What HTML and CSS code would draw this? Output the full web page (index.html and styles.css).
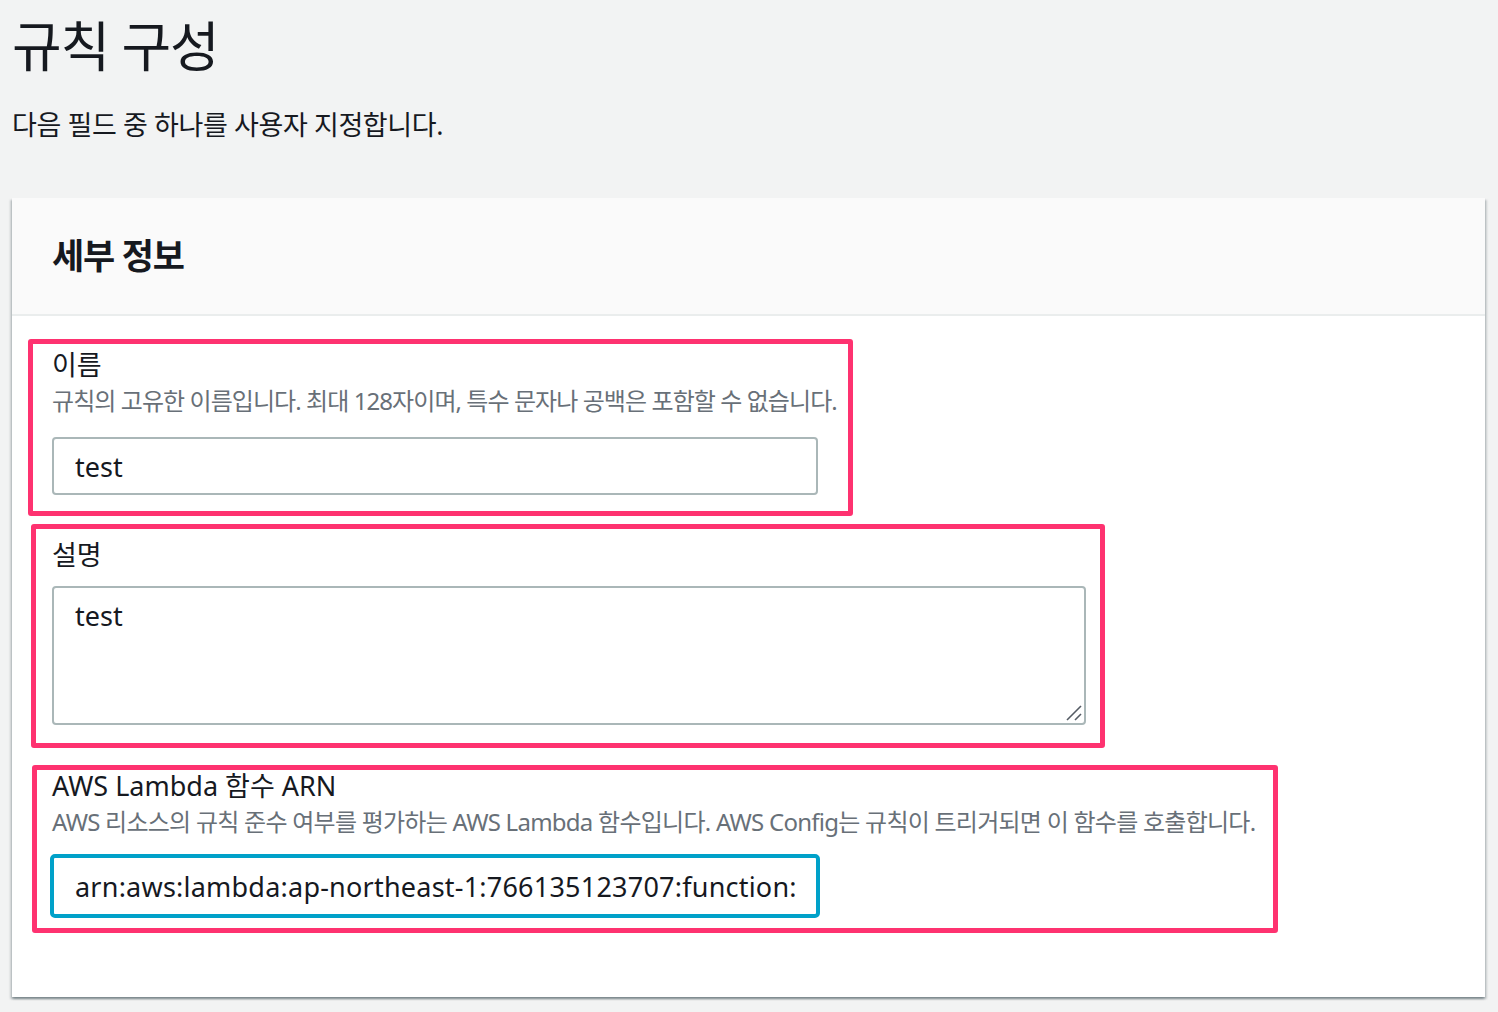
FILE: index.html
```html
<!DOCTYPE html>
<html lang="ko">
<head>
<meta charset="utf-8">
<title>규칙 구성</title>
<link rel="stylesheet" href="styles.css">
</head>
<body>
<div class="page">
  <h1 class="title">규칙 구성</h1>
  <p class="subtitle">다음 필드 중 하나를 사용자 지정합니다.</p>

  <section class="card">
    <header class="card-header">
      <h2 class="card-title">세부 정보</h2>
    </header>
    <div class="card-body">
      <div class="field field-name">
        <div class="label">이름</div>
        <div class="desc desc-name">규칙의 고유한 이름입니다. 최대 128자이며, 특수 문자나 공백은 포함할 수 없습니다.</div>
        <input class="input input-name" type="text" value="test">
      </div>

      <div class="field field-desc">
        <div class="label">설명</div>
        <div class="textarea-wrap">
          <textarea class="textarea">test</textarea>
          <svg class="grip" width="18" height="18" viewBox="0 0 18 18" aria-hidden="true">
            <line x1="2" y1="16" x2="16" y2="2" stroke="#545b64" stroke-width="1.6"/>
            <line x1="10" y1="16" x2="16" y2="10" stroke="#545b64" stroke-width="1.6"/>
          </svg>
        </div>
      </div>

      <div class="field field-arn">
        <div class="label label-arn">AWS Lambda 함수 ARN</div>
        <div class="desc desc-arn">AWS 리소스의 규칙 준수 여부를 평가하는 AWS Lambda 함수입니다. AWS Config는 규칙이 트리거되면 이 함수를 호출합니다.</div>
        <input class="input input-arn" type="text" value="arn:aws:lambda:ap-northeast-1:766135123707:function:">
      </div>
    </div>
  </section>
</div>
</body>
</html>
```
FILE: styles.css
```css
* { box-sizing: border-box; }

html, body {
  margin: 0;
  padding: 0;
}

body {
  background: #f2f3f3;
  color: #16191f;
  font-family: "Noto Sans", "Noto Sans CJK KR", sans-serif;
}

.page {
  padding: 0 0 0 12px;
  width: 1498px;
  height: 1012px;
  overflow: hidden;
}

.title {
  margin: 14px 0 0;
  font-size: 54px;
  line-height: 64px;
  font-weight: 400;
  letter-spacing: -1.3px;
}

.subtitle {
  margin: 29px 0 0;
  font-size: 27px;
  line-height: 36px;
  letter-spacing: -0.4px;
}

.card {
  margin-top: 55px;
  width: 1473px;
  background: #ffffff;
  box-shadow: 0 2px 2px 0 rgba(0, 28, 36, 0.3), 2px 2px 2px 0 rgba(0, 28, 36, 0.15), -2px 2px 2px 0 rgba(0, 28, 36, 0.15);
}

.card-header {
  height: 118px;
  background: #fafafa;
  border-bottom: 2px solid #eaeded;
  display: flex;
  align-items: center;
  padding-left: 40px;
}

.card-title {
  margin: 0;
  font-size: 35px;
  font-weight: 700;
  letter-spacing: -1.25px;
  line-height: 40px;
}

.card-body {
  padding: 23px 0 64px 0;
  display: flex;
  flex-direction: column;
  align-items: flex-start;
}

.field {
  border: 5px solid #fe3270;
  border-radius: 3px;
}

.label {
  font-size: 27px;
  line-height: 32px;
}

.desc {
  margin-top: 4px;
  font-size: 24px;
  line-height: 32px;
  color: #687078;
  white-space: nowrap;
}

.desc-name {
  letter-spacing: -0.93px;
}

.desc-arn {
  letter-spacing: -0.75px;
}

.input {
  display: block;
  font-family: inherit;
  font-size: 27px;
  color: #16191f;
  padding: 0 21px;
  background: #fff;
  outline: none;
}

.field-name {
  margin-left: 16px;
  width: 825px;
  height: 177px;
  padding: 5px 0 0 19px;
}

.input-name {
  margin-top: 20px;
  width: 766px;
  height: 58px;
  border: 2px solid #aab7b8;
  border-radius: 4px;
}

.field-desc {
  margin-top: 8px;
  margin-left: 19px;
  width: 1074px;
  height: 224px;
  padding: 10px 0 0 16px;
}

.textarea-wrap {
  position: relative;
  margin-top: 15px;
  width: 1034px;
  height: 139px;
}

.textarea {
  display: block;
  width: 100%;
  height: 100%;
  border: 2px solid #aab7b8;
  border-radius: 4px;
  padding: 8px 21px;
  font-family: inherit;
  font-size: 27px;
  line-height: 40px;
  color: #16191f;
  resize: none;
  outline: none;
}

.grip {
  position: absolute;
  right: 3px;
  bottom: 3px;
}

.field-arn {
  margin-top: 17px;
  margin-left: 20px;
  width: 1246px;
  height: 168px;
  padding: 0 0 0 13px;
}

.label-arn,
.desc-arn {
  padding-left: 2px;
}

.input-arn {
  margin-top: 16px;
  width: 770px;
  height: 64px;
  border: 4px solid #00a1c9;
  border-radius: 5px;
  letter-spacing: 0.22px;
}
```
